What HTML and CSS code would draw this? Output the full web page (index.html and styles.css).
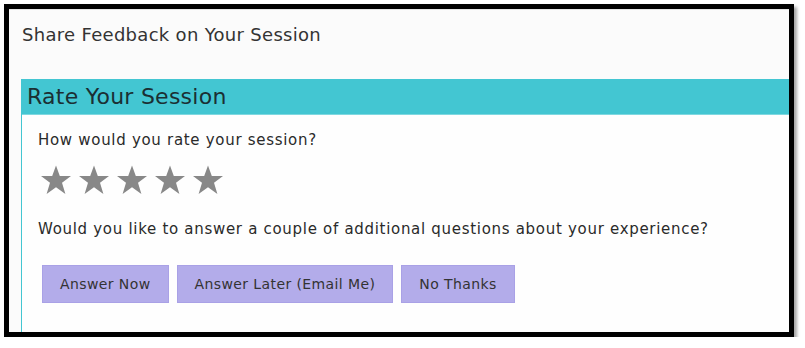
FILE: index.html
```html
<!DOCTYPE html>
<html lang="en">
<head>
    <meta charset="UTF-8">
    <meta name="viewport" content="width=device-width, initial-scale=1.0">
    <title>Share Feedback on Your Session</title>
    <link rel="stylesheet" href="styles.css">
</head>
<body>
    <div class="frame">
        <div class="window">
            <h1 class="window-title">Share Feedback on Your Session</h1>

            <div class="panel">
                <h2 class="panel-header">Rate Your Session</h2>
                <div class="panel-body">
                    <p class="question">How would you rate your session?</p>

                    <div class="stars">
                        <svg class="star" viewBox="0 0 32 30"><polygon points="16,0.5 19.8,11 31,11 22,17.8 25.4,29 16,22.2 6.6,29 10,17.8 1,11 12.2,11"/></svg>
                        <svg class="star" viewBox="0 0 32 30"><polygon points="16,0.5 19.8,11 31,11 22,17.8 25.4,29 16,22.2 6.6,29 10,17.8 1,11 12.2,11"/></svg>
                        <svg class="star" viewBox="0 0 32 30"><polygon points="16,0.5 19.8,11 31,11 22,17.8 25.4,29 16,22.2 6.6,29 10,17.8 1,11 12.2,11"/></svg>
                        <svg class="star" viewBox="0 0 32 30"><polygon points="16,0.5 19.8,11 31,11 22,17.8 25.4,29 16,22.2 6.6,29 10,17.8 1,11 12.2,11"/></svg>
                        <svg class="star" viewBox="0 0 32 30"><polygon points="16,0.5 19.8,11 31,11 22,17.8 25.4,29 16,22.2 6.6,29 10,17.8 1,11 12.2,11"/></svg>
                    </div>

                    <p class="question second">Would you like to answer a couple of additional questions about your experience?</p>

                    <div class="actions">
                        <button class="action-button">Answer Now</button>
                        <button class="action-button">Answer Later (Email Me)</button>
                        <button class="action-button">No Thanks</button>
                    </div>
                </div>
            </div>
        </div>
    </div>
</body>
</html>
```

FILE: styles.css
```css
:root {
    --teal: #43c6d2;
    --lavender: #b3acea;
    --text-color: #2a2a2a;
    --star-gray: #888888;
    --window-bg: #fbfbfb;
}

* {
    margin: 0;
    padding: 0;
    box-sizing: border-box;
}

body {
    background-color: #ffffff;
    font-family: 'DejaVu Sans', sans-serif;
    color: var(--text-color);
}

.frame {
    margin: 4px 0 0 4px;
    width: 790px;
    height: 333px;
    border: 5px solid #000000;
    box-shadow: 3px 3px 3px rgba(0, 0, 0, 0.35);
    background-color: var(--window-bg);
    overflow: hidden;
}

.window {
    border-top: 1px solid #e2e2e2;
    height: 100%;
}

.window-title {
    font-size: 18px;
    line-height: 22px;
    letter-spacing: 0.3px;
    font-weight: normal;
    color: #333333;
    padding: 14px 0 0 13px;
    height: 69px;
}

.panel {
    margin-left: 12px;
    border-left: 1px solid var(--teal);
    background-color: #fefefe;
    height: 100%;
}

.panel-header {
    background-color: var(--teal);
    border-bottom: 1px solid #7fd8e0;
    height: 36px;
    padding: 5px 0 0 5px;
    font-size: 22px;
    line-height: 26px;
    letter-spacing: 0.25px;
    font-weight: normal;
    color: #1b2f33;
}

.panel-body {
    padding: 15px 0 0 16px;
}

.question {
    font-size: 15px;
    line-height: 20px;
    letter-spacing: 0.7px;
}

.stars {
    display: flex;
    gap: 6px;
    margin: 15px 0 0 2px;
}

.star {
    width: 32px;
    height: 30px;
    fill: var(--star-gray);
}

.question.second {
    margin-top: 24px;
}

.actions {
    display: flex;
    gap: 8px;
    margin: 26px 0 0 4px;
}

.action-button {
    height: 38px;
    padding: 0 17px;
    background-color: var(--lavender);
    border: 1px solid #a9a1e6;
    color: #333333;
    font-family: 'DejaVu Sans', sans-serif;
    font-size: 14px;
    letter-spacing: 0.4px;
}
```
